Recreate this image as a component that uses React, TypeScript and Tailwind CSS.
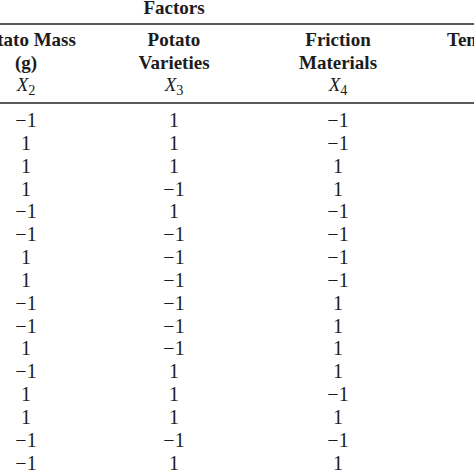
import React from "react";

const rows: [string, string, string][] = [
  ["−1", "1", "−1"],
  ["1", "1", "−1"],
  ["1", "1", "1"],
  ["1", "−1", "1"],
  ["−1", "1", "−1"],
  ["−1", "−1", "−1"],
  ["1", "−1", "−1"],
  ["1", "−1", "−1"],
  ["−1", "−1", "1"],
  ["−1", "−1", "1"],
  ["1", "−1", "1"],
  ["−1", "1", "1"],
  ["1", "1", "−1"],
  ["1", "1", "1"],
  ["−1", "−1", "−1"],
  ["−1", "1", "1"],
];

const cols = "grid grid-cols-[148px_148px_180px_138px]";

export default function App() {
  return (
    <div
      className="w-[474px] h-[474px] overflow-hidden bg-white text-[#1c1c1c]"
      style={{ fontFamily: '"Liberation Serif", "Times New Roman", serif' }}
    >
      <div className="ml-[-48px] w-[614px]">
        <div className={`${cols} h-[23px]`}>
          <div />
          <div className="text-center font-bold text-[19px] leading-[15px]">Factors</div>
          <div />
          <div />
        </div>
        <div className="h-[2px] bg-[#5a5a5a]" />
        <div className={`${cols} pt-[4px] pb-[5.5px] text-[19px] leading-[22.5px] font-bold text-center`}>
          <div>
            Potato Mass
            <br />
            (g)
            <br />
            <span className="italic font-normal">X</span>
            <sub className="font-normal">2</sub>
          </div>
          <div>
            Potato
            <br />
            Varieties
            <br />
            <span className="italic font-normal">X</span>
            <sub className="font-normal">3</sub>
          </div>
          <div>
            Friction
            <br />
            Materials
            <br />
            <span className="italic font-normal">X</span>
            <sub className="font-normal">4</sub>
          </div>
          <div className="text-left pl-[19px]">Temperature</div>
        </div>
        <div className="h-[2px] bg-[#5a5a5a]" />
        <div className="pt-[5px] text-[20px] leading-[22.85px]">
          {rows.map((r, i) => (
            <div key={i} className={`${cols} text-center`}>
              <div>{r[0]}</div>
              <div>{r[1]}</div>
              <div>{r[2]}</div>
              <div />
            </div>
          ))}
        </div>
      </div>
    </div>
  );
}
